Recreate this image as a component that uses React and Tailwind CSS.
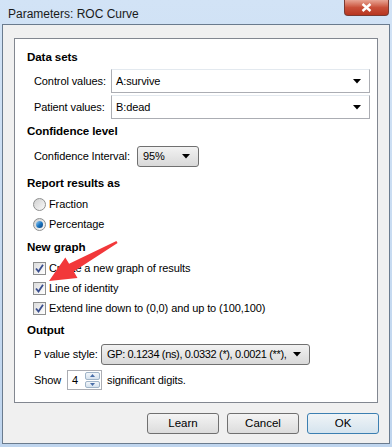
import React from "react";

const Arrow = () => (
  <svg className="ml-auto mr-[8px] shrink-0" width="8" height="5" viewBox="0 0 8 5">
    <path d="M0 0 H8 L4 4.5 Z" fill="#000" />
  </svg>
);

const Combo = ({ value, width }) => (
  <div
    className={`flex items-center h-full shrink-0 ${width} border border-[#abadb3] border-t-[#e3e9ef] bg-white pl-[4px] text-black`}
  >
    <span>{value}</span>
    <Arrow />
  </div>
);

const DropList = ({ value, width, tight }) => (
  <div
    className={`flex items-center h-full shrink-0 ${width} rounded-[3px] border border-[#707070] bg-gradient-to-b from-[#f2f2f2] to-[#d9d9d9] pl-[5px] text-black`}
  >
    <span className={`whitespace-nowrap ${tight ? "tracking-[-0.35px]" : ""}`}>{value}</span>
    <Arrow />
  </div>
);

const Heading = ({ children, className }) => (
  <div className={`flex items-center h-[20px] text-[11.6px] font-bold text-black ${className}`}>
    {children}
  </div>
);

const Label = ({ children, width }) => (
  <span className={`pl-[7px] shrink-0 whitespace-nowrap ${width}`}>{children}</span>
);

const Check = ({ label }) => (
  <div className="flex items-center h-[20px] pl-[6px] gap-[3px]">
    <div className="flex items-center justify-center w-[13px] h-[13px] border border-[#8e8f8f] bg-gradient-to-br from-[#dcdcdc] to-white">
      <svg width="9" height="9" viewBox="0 0 9 9">
        <path d="M1 4.5 L3.5 7.5 L8 0.8" fill="none" stroke="#3b4f8f" strokeWidth="1.8" />
      </svg>
    </div>
    <span className="whitespace-nowrap">{label}</span>
  </div>
);

const Radio = ({ label, on }) => (
  <div className="flex items-center h-[20px] pl-[6px] gap-[3px]">
    <div className="flex items-center justify-center w-[13px] h-[13px] rounded-full border border-[#8e8f8f] bg-gradient-to-br from-[#d0d0d0] to-[#fafafa]">
      {on && (
        <div className="w-[7px] h-[7px] rounded-full bg-gradient-to-br from-[#9fd6f7] via-[#1c79c4] to-[#0b3f7e]" />
      )}
    </div>
    <span>{label}</span>
  </div>
);

const Button = ({ label, focus }) => (
  <div
    className={`flex items-center justify-center w-[72px] h-[21px] rounded-[3px] border text-[11.5px] text-black ${
      focus
        ? "border-[#3c7fb1] bg-gradient-to-b from-[#f0f4f7] to-[#d5e4ee]"
        : "border-[#707070] bg-gradient-to-b from-[#f4f4f4] to-[#dcdcdc]"
    }`}
  >
    {label}
  </div>
);

export default function App() {
  return (
    <div className="relative w-[392px] h-[447px] overflow-hidden bg-gradient-to-b from-[#d2e3f6] to-[#bfd5ee] font-['Liberation_Sans',Arial,sans-serif] text-black">
      {/* Title bar */}
      <div className="flex items-start h-[24px]">
        <div className="pl-[8px] pt-[5px] text-[12px] text-[#1a1a1a]">Parameters: ROC Curve</div>
        <div className="ml-auto mr-[3px] flex items-center justify-center w-[45px] h-[16px] rounded-b-[4px] border border-t-0 border-[#7a3a32] bg-gradient-to-b from-[#e7a494] via-[#c9503a] to-[#b73520]">
          <svg width="11" height="9" viewBox="0 0 11 9">
            <path d="M1.5 1 L9.5 8 M9.5 1 L1.5 8" stroke="#fff" strokeWidth="2.4" />
          </svg>
        </div>
      </div>

      {/* Body */}
      <div className="mx-[2px] h-[420px] border border-[#6a7b8e] bg-[#f0f0f0]">
        <div className="mt-[13px] ml-[11px] w-[364px] h-[365px] border border-[#828790] bg-white pl-[12px] pt-[8px] text-[11px] tracking-[-0.1px]">
          <Heading>Data sets</Heading>
          <div className="flex items-center h-[24px] mt-[2px]">
            <Label width="w-[84px]">Control values:</Label>
            <Combo value="A:survive" width="w-[259px]" />
          </div>
          <div className="flex items-center h-[24px] mt-[2px]">
            <Label width="w-[84px]">Patient values:</Label>
            <Combo value="B:dead" width="w-[259px]" />
          </div>

          <Heading className="mt-[2px]">Confidence level</Heading>
          <div className="flex items-center h-[21px] mt-[5px]">
            <Label width="w-[110px]">Confidence Interval:</Label>
            <DropList value="95%" width="w-[62px]" />
          </div>

          <Heading className="mt-[6px]">Report results as</Heading>
          <div className="mt-[1px]">
            <Radio label="Fraction" />
            <Radio label="Percentage" on />
          </div>

          <Heading className="mt-[3px]">New graph</Heading>
          <div className="mt-[1px]">
            <Check label="Create a new graph of results" />
            <Check label="Line of identity" />
            <Check label="Extend line down to (0,0) and up to (100,100)" />
          </div>

          <Heading className="mt-[2px]">Output</Heading>
          <div className="flex items-center h-[21px] mt-[4px]">
            <Label width="w-[74px]">P value style:</Label>
            <DropList value="GP: 0.1234 (ns), 0.0332 (*), 0.0021 (**)," width="w-[209px]" tight />
          </div>
          <div className="flex items-center h-[20px] mt-[5px]">
            <Label width="w-[40px]">Show</Label>
            <div className="flex items-center w-[35px] h-[20px] border border-[#abadb3] bg-white">
              <span className="pl-[4px]">4</span>
              <div className="ml-auto mr-[1px] flex flex-col w-[15px] h-[16px] gap-[1px]">
                <div className="flex-1 flex items-center justify-center rounded-[2px] border border-[#a0b4c8] bg-gradient-to-b from-[#f2f6fa] to-[#d6e2ee]">
                  <svg width="5" height="3" viewBox="0 0 5 3"><path d="M0 3 L2.5 0 L5 3Z" fill="#4a6ea8" /></svg>
                </div>
                <div className="flex-1 flex items-center justify-center rounded-[2px] border border-[#a0b4c8] bg-gradient-to-b from-[#f2f6fa] to-[#d6e2ee]">
                  <svg width="5" height="3" viewBox="0 0 5 3"><path d="M0 0 L2.5 3 L5 0Z" fill="#4a6ea8" /></svg>
                </div>
              </div>
            </div>
            <span className="pl-[5px] whitespace-nowrap">significant digits.</span>
          </div>
        </div>

        {/* Buttons */}
        <div className="flex justify-end gap-[8px] mt-[10px] mr-[10px]">
          <Button label="Learn" />
          <Button label="Cancel" />
          <Button label="OK" focus />
        </div>
      </div>

      {/* Annotation arrow */}
      <svg className="absolute left-0 top-0 pointer-events-none" width="392" height="447">
        <polygon
          points="117.6,242.9 73.7,271.6 77.5,278 49,281 65.3,257.4 69.1,263.8 116.4,241.1"
          fill="#f2383a"
        />
      </svg>
    </div>
  );
}
